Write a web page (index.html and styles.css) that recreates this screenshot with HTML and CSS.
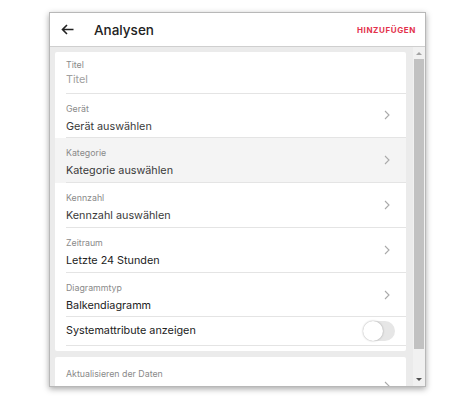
FILE: index.html
```html
<!DOCTYPE html>
<html lang="de">
<head>
<meta charset="utf-8">
<link rel="stylesheet" href="styles.css">
</head>
<body>
<div class="window">
  <header class="header">
    <svg class="back" width="13" height="11" viewBox="0 0 13 11"><path d="M12.5 5.5H1.5M6 1L1.5 5.5L6 10" fill="none" stroke="#222" stroke-width="1.6"/></svg>
    <span class="title">Analysen</span>
    <span class="add">HINZUFÜGEN</span>
  </header>
  <div class="main">
    <div class="content">
      <div class="card">
        <div class="row first"><div class="inner"><div class="texts"><div class="label">Titel</div><div class="value placeholder">Titel</div></div></div></div>
        <div class="row"><div class="inner"><div class="texts"><div class="label">Gerät</div><div class="value">Gerät auswählen</div></div><svg class="chev" width="6" height="10" viewBox="0 0 6 10"><path d="M1 1L5 5L1 9" fill="none" stroke="#aaa" stroke-width="1.1"/></svg></div></div>
        <div class="row hover"><div class="inner"><div class="texts"><div class="label">Kategorie</div><div class="value">Kategorie auswählen</div></div><svg class="chev" width="6" height="10" viewBox="0 0 6 10"><path d="M1 1L5 5L1 9" fill="none" stroke="#aaa" stroke-width="1.1"/></svg></div></div>
        <div class="row"><div class="inner"><div class="texts"><div class="label">Kennzahl</div><div class="value">Kennzahl auswählen</div></div><svg class="chev" width="6" height="10" viewBox="0 0 6 10"><path d="M1 1L5 5L1 9" fill="none" stroke="#aaa" stroke-width="1.1"/></svg></div></div>
        <div class="row"><div class="inner"><div class="texts"><div class="label">Zeitraum</div><div class="value dark">Letzte 24 Stunden</div></div><svg class="chev" width="6" height="10" viewBox="0 0 6 10"><path d="M1 1L5 5L1 9" fill="none" stroke="#aaa" stroke-width="1.1"/></svg></div></div>
        <div class="row"><div class="inner"><div class="texts"><div class="label">Diagrammtyp</div><div class="value dark">Balkendiagramm</div></div><svg class="chev" width="6" height="10" viewBox="0 0 6 10"><path d="M1 1L5 5L1 9" fill="none" stroke="#aaa" stroke-width="1.1"/></svg></div></div>
        <div class="row toggle-row"><div class="inner"><div class="value dark">Systemattribute anzeigen</div><div class="toggle"><div class="knob"></div></div></div></div>
      </div>
      <div class="card second">
        <div class="row"><div class="inner"><div class="texts"><div class="label">Aktualisieren der Daten</div></div><svg class="chev low" width="6" height="10" viewBox="0 0 6 10"><path d="M1 1L5 5L1 9" fill="none" stroke="#aaa" stroke-width="1.1"/></svg></div></div>
      </div>
    </div>
    <div class="scrollbar">
      <div class="arrow up"></div>
      <div class="thumb"></div>
      <div class="arrow down"></div>
    </div>
  </div>
</div>
</body>
</html>
```
FILE: styles.css
```css
html, body {
  margin: 0;
  padding: 0;
  background: #fff;
}
body {
  font-family: Inter, "Noto Sans", sans-serif;
  width: 474px;
  height: 413px;
  overflow: hidden;
}
.window {
  margin: 12px 0 0 49px;
  width: 375px;
  height: 373px;
  border: 1px solid #b8b8b8;
  box-shadow: 0 2px 6px rgba(0, 0, 0, 0.35);
  display: flex;
  flex-direction: column;
  overflow: hidden;
  background: #fff;
}
.header {
  height: 33px;
  flex: none;
  display: flex;
  align-items: center;
  border-bottom: 1px solid #cfcfcf;
  background: #fff;
}
.back {
  margin-left: 11px;
  flex: none;
}
.title {
  margin-left: 20px;
  font-size: 13.5px;
  font-weight: 500;
  color: #222;
}
.add {
  margin-left: auto;
  margin-right: 9px;
  font-size: 8px;
  font-weight: 700;
  letter-spacing: 0.6px;
  color: #e3324c;
}
.main {
  flex: 1;
  display: flex;
  min-height: 0;
}
.content {
  flex: 1;
  background: #ebebeb;
  padding: 5px 7px 0 5px;
  overflow: hidden;
}
.card {
  background: #fff;
  border-radius: 2px;
  padding-bottom: 5px;
}
.card.second {
  margin-top: 6px;
}
.row {
  padding-left: 11px;
  height: 44.8px;
  box-sizing: border-box;
}
.row.first {
  height: 41.5px;
}
.row.hover {
  background: #f4f4f4;
}
.inner {
  height: 100%;
  box-sizing: border-box;
  border-bottom: 1px solid #e4e4e4;
  display: flex;
  align-items: center;
  padding-right: 16px;
}
.texts {
  flex: 1;
  align-self: flex-start;
  display: flex;
  flex-direction: column;
  gap: 6px;
  padding-top: 9px;
}
.row.first .texts {
  gap: 3px;
  padding-top: 7px;
}
.label {
  font-size: 8.8px;
  color: #8a8a8a;
  line-height: 11px;
}
.value {
  font-size: 10.8px;
  color: #3a3a3a;
  line-height: 14px;
}
.value.placeholder {
  color: #a0a0a0;
}
.value.dark {
  color: #222;
}
.chev {
  flex: none;
}
.toggle-row {
  height: 29px;
}
.toggle-row .value {
  flex: 1;
}
.toggle-row .inner {
  padding-right: 11px;
}
.toggle {
  width: 32px;
  height: 20px;
  border-radius: 10px;
  background: #e6e6e6;
  position: relative;
}
.knob {
  position: absolute;
  left: 0;
  top: 0;
  width: 20px;
  height: 20px;
  border-radius: 50%;
  background: #fff;
  box-shadow: 0 0 2px rgba(0, 0, 0, 0.35);
}
.card.second .row {
  height: 40px;
}
.card.second .texts {
  padding-top: 11px;
}
.chev.low {
  margin-top: 18px;
}
.scrollbar {
  width: 12px;
  flex: none;
  background: #f1f1f1;
  display: flex;
  flex-direction: column;
  align-items: center;
}
.thumb {
  width: 10px;
  height: 290px;
  background: #c1c1c1;
  margin-top: 4px;
}
.arrow {
  width: 0;
  height: 0;
  border-left: 3px solid transparent;
  border-right: 3px solid transparent;
}
.arrow.up {
  border-bottom: 3px solid #a3a3a3;
  margin-top: 5px;
}
.arrow.down {
  border-top: 3px solid #505050;
  margin-top: auto;
  margin-bottom: 5px;
}
```
